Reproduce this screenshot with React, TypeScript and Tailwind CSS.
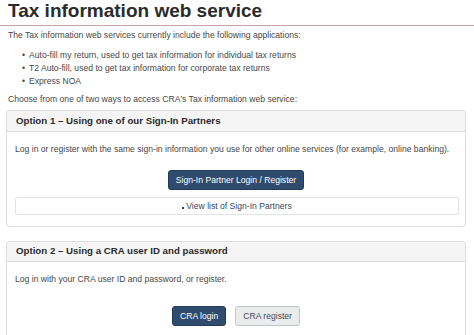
export default function App() {
  return (
    <div className="w-[474px] h-[335px] overflow-hidden bg-white font-['Liberation_Sans',Arial,sans-serif] text-[#474747]">
      <h1 className="px-[8px] pb-[3px] text-[19px] leading-[22px] font-bold text-[#2b2b2b] border-b border-[#c9a3a3]">
        Tax information web service
      </h1>

      <div className="px-[8px] text-[8.6px] leading-[13px]">
        <p className="mt-[3px]">The Tax information web services currently include the following applications:</p>
        <ul className="mt-[7px] pl-[14px]">
          <li className="flex">
            <span className="w-[7px]">•</span>
            <span>Auto-fill my return, used to get tax information for individual tax returns</span>
          </li>
          <li className="flex">
            <span className="w-[7px]">•</span>
            <span>T2 Auto-fill, used to get tax information for corporate tax returns</span>
          </li>
          <li className="flex">
            <span className="w-[7px]">•</span>
            <span>Express NOA</span>
          </li>
        </ul>
        <p className="mt-[5px]">Choose from one of two ways to access CRA's Tax information web service:</p>
      </div>

      {/* Option 1 */}
      <section className="mt-[4px] ml-[6px] w-[460px] border border-[#dddddd] rounded-[3px]">
        <div className="h-[21px] flex items-center px-[9px] bg-[#f5f5f5] border-b border-[#dddddd] rounded-t-[3px]">
          <h2 className="text-[9.7px] font-bold text-[#2b2b2b]">Option 1 – Using one of our Sign-In Partners</h2>
        </div>
        <div className="px-[8px] pt-[11px] pb-[11px] text-[8.6px] leading-[13px]">
          <p>Log in or register with the same sign-in information you use for other online services (for example, online banking).</p>
          <div className="mt-[14px] flex justify-center">
            <button className="h-[20px] px-[7px] rounded-[3px] bg-[#2f4b6e] border border-[#243b58] text-white text-[8.6px]">
              Sign-In Partner Login / Register
            </button>
          </div>
          <div className="mt-[7px] mr-[-2px] h-[18px] flex items-center justify-center gap-[2px] border border-[#e3e3e3] rounded-[2px] text-[#34475f]">
            <span className="w-[2px] h-[2px] bg-[#34475f] mt-[3px]" />
            <span>View list of Sign-In Partners</span>
          </div>
        </div>
      </section>

      {/* Option 2 */}
      <section className="mt-[14px] ml-[6px] w-[460px] border border-[#dddddd] rounded-[3px]">
        <div className="h-[20px] flex items-center px-[9px] bg-[#f5f5f5] border-b border-[#dddddd] rounded-t-[3px]">
          <h2 className="text-[9.7px] font-bold text-[#2b2b2b]">Option 2 – Using a CRA user ID and password</h2>
        </div>
        <div className="px-[8px] pt-[11px] pb-[12px] text-[8.6px] leading-[13px]">
          <p>Log in with your CRA user ID and password, or register.</p>
          <div className="mt-[20px] flex justify-center gap-[9px]">
            <button className="h-[20px] px-[7px] rounded-[3px] bg-[#2f4b6e] border border-[#243b58] text-white text-[8.6px]">
              CRA login
            </button>
            <button className="h-[20px] px-[7px] rounded-[3px] bg-[#eaebed] border border-[#c4c6ca] text-[#3e4b5c] text-[8.6px]">
              CRA register
            </button>
          </div>
        </div>
      </section>
    </div>
  );
}
